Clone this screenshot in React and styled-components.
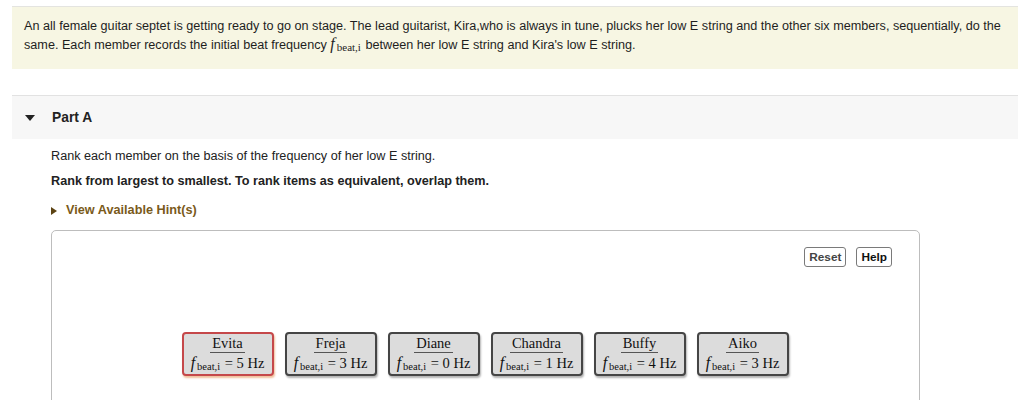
import React from "react";
import styled, { createGlobalStyle } from "styled-components";

const Global = createGlobalStyle`
  html, body { margin: 0; padding: 0; background: #fff; }
  body { font-family: "Liberation Sans", Arial, Helvetica, sans-serif; color: #222; }
`;

const Page = styled.div`
  padding: 6px 6px 0 12px;
  width: 1024px;
  box-sizing: border-box;
  height: 400px;
  overflow: hidden;
`;

const Intro = styled.div`
  background: #f7f6e3;
  border-top: 1px solid #e4e4e0;
  padding: 11px 12px 15px 12px;
  font-size: 12.65px;
  line-height: 17px;
  color: #1e1e1e;
`;

const MathF = styled.span`
  font-family: "Liberation Serif", "DejaVu Serif", serif;
  font-style: italic;
  font-size: ${(p) => p.$size || 15}px;
  margin-right: 2px;
`;

const Sub = styled.span`
  font-family: "Liberation Serif", "DejaVu Serif", serif;
  font-style: normal;
  font-size: ${(p) => p.$size || 10}px;
  vertical-align: -2px;
  line-height: 0;
  margin-right: 1px;
`;

const PartHeader = styled.div`
  margin-top: 26px;
  height: 43px;
  background: #f7f7f7;
  border-top: 1px solid #e2e2e2;
  display: flex;
  align-items: center;
  padding-left: 13px;
`;

const DownCaret = styled.span`
  width: 0;
  height: 0;
  border-left: 5px solid transparent;
  border-right: 5px solid transparent;
  border-top: 6px solid #222;
  margin-right: 17px;
`;

const PartTitle = styled.span`
  font-size: 13.8px;
  font-weight: 700;
  color: #222;
`;

const Content = styled.div`
  padding-left: 39px;
  padding-right: 98px;
`;

const Para = styled.div`
  font-size: 12.65px;
  line-height: 17px;
  margin-top: ${(p) => p.$mt}px;
  font-weight: ${(p) => (p.$bold ? 700 : 400)};
`;

const Hint = styled.div`
  display: flex;
  align-items: center;
  margin-top: 12px;
  font-size: 12.7px;
  line-height: 17px;
  font-weight: 700;
  color: #7a5a1a;
`;

const RightCaret = styled.span`
  width: 0;
  height: 0;
  border-top: 4px solid transparent;
  border-bottom: 4px solid transparent;
  border-left: 6px solid #5c4313;
  margin-right: 9px;
`;

const Board = styled.div`
  margin-top: 11px;
  border: 1px solid #bdbdbd;
  border-radius: 5px;
  height: 200px;
  padding: 16px 27px 0 0;
`;

const Tools = styled.div`
  display: flex;
  justify-content: flex-end;
  gap: 10px;
`;

const ToolButton = styled.button`
  font-family: "Liberation Sans", Arial, sans-serif;
  font-size: 11.8px;
  font-weight: 700;
  color: ${(p) => (p.$dark ? "#111" : "#444")};
  background: #fff;
  border: 1px solid #7a7a7a;
  border-radius: 3px;
  height: 20px;
  padding: 0 4px;
  line-height: 18px;
`;

const Cards = styled.div`
  display: flex;
  justify-content: center;
  gap: 11px;
  margin-top: 65px;
  padding-left: 26px;
`;

const Card = styled.div`
  width: 88px;
  height: 40px;
  background: #dcdcdc;
  border: 2px solid ${(p) => (p.$active ? "#c5484a" : "#454545")};
  border-radius: 4px;
  box-shadow: ${(p) =>
    p.$active ? "1px 2px 2px rgba(230,150,90,0.6)" : "1px 2px 2px rgba(0,0,0,0.3)"};
  display: flex;
  flex-direction: column;
  align-items: center;
  justify-content: center;
  font-family: "Liberation Serif", "DejaVu Serif", serif;
  color: #111;
`;

const Name = styled.div`
  font-size: 14.5px;
  line-height: 15px;
  padding: 0 2px 1px;
  border-bottom: 1px solid #555;
`;

const Formula = styled.div`
  font-size: 14.5px;
  line-height: 17px;
  margin-top: 1px;
  white-space: nowrap;
`;

const members = [
  { name: "Evita", val: 5, active: true },
  { name: "Freja", val: 3 },
  { name: "Diane", val: 0 },
  { name: "Chandra", val: 1 },
  { name: "Buffy", val: 4 },
  { name: "Aiko", val: 3 },
];

export default function App() {
  return (
    <>
      <Global />
      <Page>
        <Intro>
          An all female guitar septet is getting ready to go on stage. The lead guitarist, Kira,who is always in tune, plucks her low E string and the other six members, sequentially, do the same. Each member records the initial beat frequency{" "}
          <MathF $size={16}>f</MathF>
          <Sub $size={11}>beat,i</Sub> between her low E string and Kira's low E string.
        </Intro>
        <PartHeader>
          <DownCaret />
          <PartTitle>Part A</PartTitle>
        </PartHeader>
        <Content>
          <Para $mt={9}>Rank each member on the basis of the frequency of her low E string.</Para>
          <Para $mt={8} $bold>
            Rank from largest to smallest. To rank items as equivalent, overlap them.
          </Para>
          <Hint>
            <RightCaret />
            View Available Hint(s)
          </Hint>
          <Board>
            <Tools>
              <ToolButton>Reset</ToolButton>
              <ToolButton $dark>Help</ToolButton>
            </Tools>
            <Cards>
              {members.map((m) => (
                <Card key={m.name} $active={m.active}>
                  <Name>{m.name}</Name>
                  <Formula>
                    <MathF $size={16}>f</MathF>
                    <Sub $size={10.5}>beat,i</Sub> = {m.val} Hz
                  </Formula>
                </Card>
              ))}
            </Cards>
          </Board>
        </Content>
      </Page>
    </>
  );
}
